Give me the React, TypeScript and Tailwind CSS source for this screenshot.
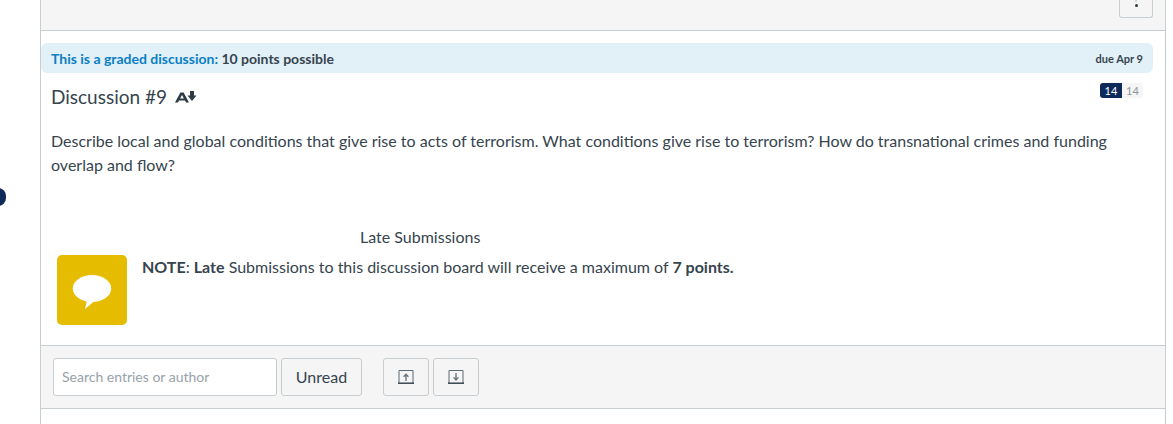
const ToTopIcon = () => (
  <svg width="16" height="14" viewBox="0 0 16 14" fill="none">
    <path d="M1 13V0.5H15V13" stroke="#5d6b75" strokeWidth="1" />
    <path d="M0 13.2H16" stroke="#2d3b45" strokeWidth="1.4" />
    <path d="M8 11V4M5.6 6.8L8 4.2L10.4 6.8" stroke="#6b7780" strokeWidth="1.4" />
  </svg>
);

const ToBottomIcon = () => (
  <svg width="16" height="14" viewBox="0 0 16 14" fill="none">
    <path d="M1 13V0.5H15V13" stroke="#5d6b75" strokeWidth="1" />
    <path d="M0 13.2H16" stroke="#2d3b45" strokeWidth="1.4" />
    <path d="M8 3V10M5.6 7.4L8 10L10.4 7.4" stroke="#6b7780" strokeWidth="1.4" />
  </svg>
);

const SortIcon = () => (
  <svg width="22" height="12" viewBox="0 0 22 12" fill="#2d3b45">
    <path d="M0 11.5L5.4 1.5H8.6L14 11.5H11L10 9.6H4L3 11.5ZM5.1 7.6H8.9L7 4Z" />
    <path d="M12.5 4.6H21.5L17 10ZM15 0H19V5H15Z" />
  </svg>
);

const ChatIcon = () => (
  <svg width="40" height="40" viewBox="0 0 40 40" fill="#fff">
    <ellipse cx="20" cy="18.5" rx="19.2" ry="13.5" />
    <path d="M15 30L13 39L22 31.5Z" />
  </svg>
);

export default function App() {
  return (
    <div className="relative h-[424px] w-[1173px] overflow-hidden bg-white font-['Lato',sans-serif] text-[#36444e] antialiased">
      <div className="absolute left-[-10px] top-[188px] h-[18px] w-[16px] rounded-full bg-[#0e2a5a]" />
      <div className="ml-10 mr-[7px] flex h-full flex-col border-x border-[#c7cdd1]">
        <div className="flex h-[31px] justify-end border-b border-[#c7cdd1] bg-[#f5f5f5] pr-[12px]">
          <div className="flex h-[18px] w-[34px] flex-col items-center gap-[2px] rounded-b-[3px] border border-t-0 border-[#c7cdd1]">
            <span className="h-[2px] w-[2px] rounded-full bg-[#c7cdd1]" />
            <span className="h-[3px] w-[3px] rounded-full bg-[#2d3b45]" />
          </div>
        </div>

        <div className="mt-3 mr-[12px] flex h-[30px] items-center justify-between rounded-[6px] bg-[#e2f0f8] pl-[10px] pr-[10px] pt-[2px]">
          <p className="text-sm font-bold leading-none">
            <span className="text-[#0a7fc2]">This is a graded discussion:</span>{" "}
            <span>10 points possible</span>
          </p>
          <span className="text-[11px] font-bold">due Apr 9</span>
        </div>

        <div className="mt-[9px] flex items-start justify-between pl-[10px] pr-[22px]">
          <div className="flex items-center gap-[8px]">
            <h1 className="text-[19px] font-normal leading-[30px]">Discussion #9</h1>
            <SortIcon />
          </div>
          <div className="mt-[1px] flex h-[15px] text-center text-[11px] leading-[15px]">
            <span className="w-[22px] rounded-l-[3px] bg-[#0e2a5a] text-white">14</span>
            <span className="w-[21px] rounded-r-[3px] bg-[#f5f5f5] text-[#8b969e]">14</span>
          </div>
        </div>

        <p className="mt-[17px] pl-[10px] pr-[40px] text-base leading-[24px]">
          Describe local and global conditions that give rise to acts of terrorism. What conditions give rise to
          terrorism? How do transnational crimes and funding overlap and flow?
        </p>

        <p className="mt-[48px] pl-[319px] text-base leading-[24px]">Late Submissions</p>

        <div className="mt-[6px] flex items-start pl-[16px]">
          <div className="flex h-[70px] w-[70px] shrink-0 items-center justify-center rounded-[5px] bg-[#e6bc00]">
            <ChatIcon />
          </div>
          <p className="ml-[15px] text-base leading-[24px]">
            <strong className="font-bold">NOTE</strong>: <strong className="font-bold">Late</strong> Submissions to this
            discussion board will receive a maximum of <strong className="font-bold">7 points.</strong>
          </p>
        </div>

        <div className="mt-[20px] flex h-[64px] items-center border-y border-[#c7cdd1] bg-[#f5f5f5] pl-3">
          <input
            readOnly
            placeholder="Search entries or author"
            className="h-[38px] w-[224px] rounded-[3px] border border-[#c7cdd1] bg-white px-2 pb-[2px] text-sm outline-none placeholder:text-[#98a2a9]"
          />
          <button className="ml-1 h-[38px] w-[81px] rounded-[3px] border border-[#c7cdd1] bg-[#f5f5f5] text-base">
            Unread
          </button>
          <button className="ml-[21px] flex h-[38px] w-[46px] items-center justify-center rounded-[3px] border border-[#c7cdd1] bg-[#f5f5f5]">
            <ToTopIcon />
          </button>
          <button className="ml-1 flex h-[38px] w-[46px] items-center justify-center rounded-[3px] border border-[#c7cdd1] bg-[#f5f5f5]">
            <ToBottomIcon />
          </button>
        </div>
      </div>
    </div>
  );
}
